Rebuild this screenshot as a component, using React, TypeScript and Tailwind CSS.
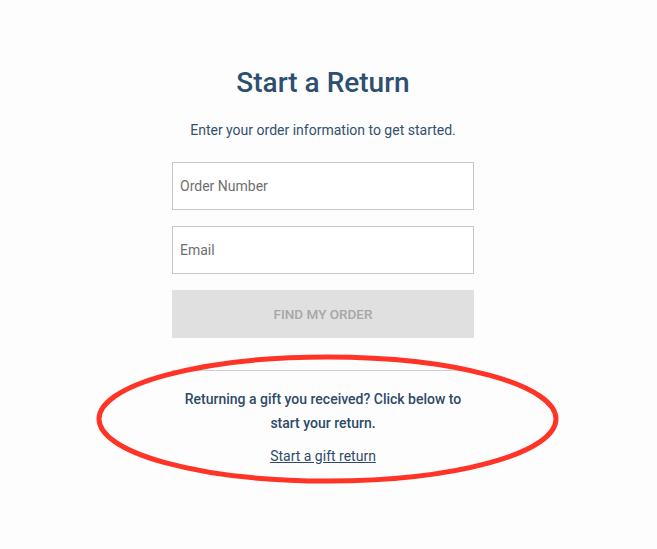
import React from "react";

export default function App() {
  return (
    <div
      className="relative min-h-[549px] w-full bg-[#fdfdfd]"
      style={{ fontFamily: "Roboto, 'Liberation Sans', sans-serif" }}
    >
      <div className="ml-[172px] flex w-[302px] flex-col pt-[64px]">
        <h1 className="text-center text-[28px] font-medium leading-[38px] text-[#2e4f70]">
          Start a Return
        </h1>
        <p className="mt-[18px] text-center text-[14px] leading-[20px] text-[#34506e]">
          Enter your order information to get started.
        </p>
        <div className="mt-[22px] flex h-[48px] items-center border border-[#c6c6c6] bg-white px-[7px] text-[14px] text-[#6f6f6f]">
          Order Number
        </div>
        <div className="mt-[16px] flex h-[48px] items-center border border-[#c6c6c6] bg-white px-[7px] text-[14px] text-[#6f6f6f]">
          Email
        </div>
        <button className="mt-[16px] flex h-[48px] items-center justify-center bg-[#e0e0e0] text-[13.5px] font-medium text-[#a7a7a7]">
          FIND MY ORDER
        </button>
        <div className="mt-[32px] h-px bg-[#cfcfcf]" />
        <p className="mt-[16px] px-[8px] text-center text-[14px] font-medium leading-[24px] text-[#2e4a68]">
          Returning a gift you received? Click below to start your return.
        </p>
        <a className="mt-[11px] text-center text-[14px] leading-[20px] text-[#2e4a68] underline">
          Start a gift return
        </a>
      </div>
      <svg
        className="pointer-events-none absolute left-0 top-0"
        width="657"
        height="549"
        viewBox="0 0 657 549"
      >
        <ellipse
          cx="327.5"
          cy="419"
          rx="228.5"
          ry="62"
          fill="none"
          stroke="#ff3426"
          strokeWidth="5"
        />
      </svg>
    </div>
  );
}
